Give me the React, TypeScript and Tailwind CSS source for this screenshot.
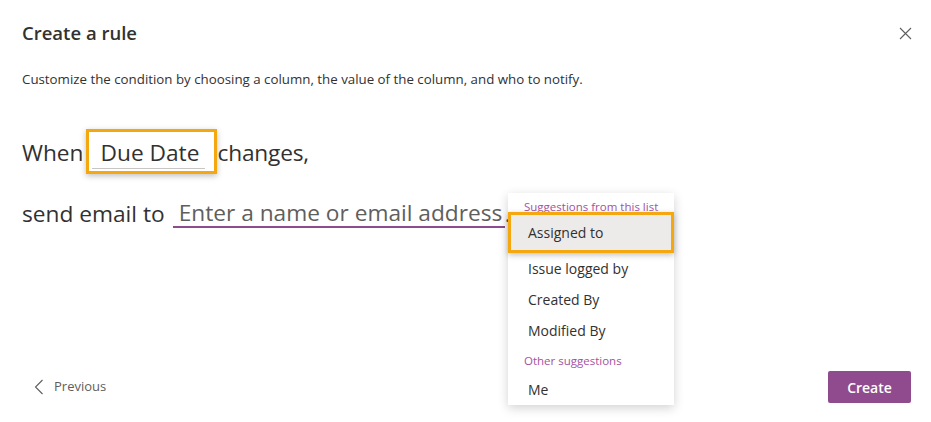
import React from "react";

const font = { fontFamily: '"Segoe UI", "Open Sans", "Noto Sans", sans-serif' };

function CloseIcon() {
  return (
    <svg width="13" height="13" viewBox="0 0 13 13" className="text-[#605e5c]">
      <path d="M1 1 L12 12 M12 1 L1 12" stroke="currentColor" strokeWidth="1.1" fill="none" />
    </svg>
  );
}

function ChevronLeft() {
  return (
    <svg width="10" height="16" viewBox="0 0 10 16" className="text-[#605e5c]">
      <path d="M8.5 1 L1.5 8 L8.5 15" stroke="currentColor" strokeWidth="1.1" fill="none" />
    </svg>
  );
}

const suggestions = ["Issue logged by", "Created By", "Modified By"];

export default function App() {
  return (
    <div
      className="relative flex h-[422px] w-[931px] flex-col overflow-hidden bg-white text-[#323130]"
      style={font}
    >
      {/* header */}
      <div className="flex items-start justify-between pl-[22px] pr-[19px] pt-[20px]">
        <h2 className="text-[18.5px] font-semibold leading-[26px]">Create a rule</h2>
        <button className="mt-[7px]">
          <CloseIcon />
        </button>
      </div>

      <p className="mt-[24px] pl-[22px] text-[13.3px] leading-[18px]">
        Customize the condition by choosing a column, the value of the column, and who to notify.
      </p>

      {/* sentence */}
      <div className="mt-[41px] flex h-[45px] items-center whitespace-nowrap pl-[22px] text-[22.7px]">
        <span className="pt-[4px]">When</span>
        <div className="ml-[2px] flex h-[45px] w-[131px] items-center border-[3px] border-[#f5a70f] shadow-[0_2px_6px_rgba(0,0,0,0.25)]">
          <div className="ml-[3px] flex h-[34px] w-[113px] items-center border-b border-[#c8c6c4] pl-[9px] pt-[4px] leading-none">
            Due Date
          </div>
        </div>
        <span className="ml-[1px] pt-[4px] tracking-[-0.2px]">changes,</span>
      </div>

      <div className="relative mt-[22px] flex h-[32px] items-center whitespace-nowrap pl-[22px] text-[22.7px]">
        <span className="pt-[4px]">send email to</span>
        <div className="ml-[8px] flex h-[32px] w-[332px] items-center border-b-2 border-[#8f4b8e] pl-[6px] pt-[4px]">
          <span className="text-[#605e5c]">Enter a name or email address</span>
        </div>
        <span className="pt-[4px] text-[#605e5c]">.</span>

        {/* suggestion dropdown */}
        <div className="absolute left-[508px] top-[-3px] z-10 w-[166px] bg-white pb-[3px] shadow-[0_3px_10px_rgba(0,0,0,0.18)]">
          <div className="h-[19px] overflow-hidden pl-[16px] pt-[6px] text-[11.5px] leading-[16px] text-[#a4519f]">
            Suggestions from this list
          </div>
          <div className="flex h-[41px] items-center border-[3px] border-[#f5a70f] bg-[#edebe9] pl-[17px] text-[14px] text-[#323130] shadow-[0_2px_6px_rgba(0,0,0,0.25)]">
            Assigned to
          </div>
          {suggestions.map((s) => (
            <div key={s} className="flex h-[31px] items-center pl-[20px] text-[14px] text-[#323130]">
              {s}
            </div>
          ))}
          <div className="flex h-[30px] items-center pl-[16px] text-[11.5px] text-[#a4519f]">
            Other suggestions
          </div>
          <div className="flex h-[26px] items-center pl-[20px] text-[14px] text-[#323130]">Me</div>
        </div>
      </div>

      {/* footer */}
      <div className="mt-auto flex items-center justify-between pb-[19px] pl-[34px] pr-[20px]">
        <button className="flex items-center gap-[10px] text-[13px] text-[#605e5c]">
          <ChevronLeft />
          <span>Previous</span>
        </button>
        <button className="h-[32px] w-[83px] rounded-[2px] bg-[#8f4b8e] text-[14px] font-semibold text-white">
          Create
        </button>
      </div>
    </div>
  );
}
